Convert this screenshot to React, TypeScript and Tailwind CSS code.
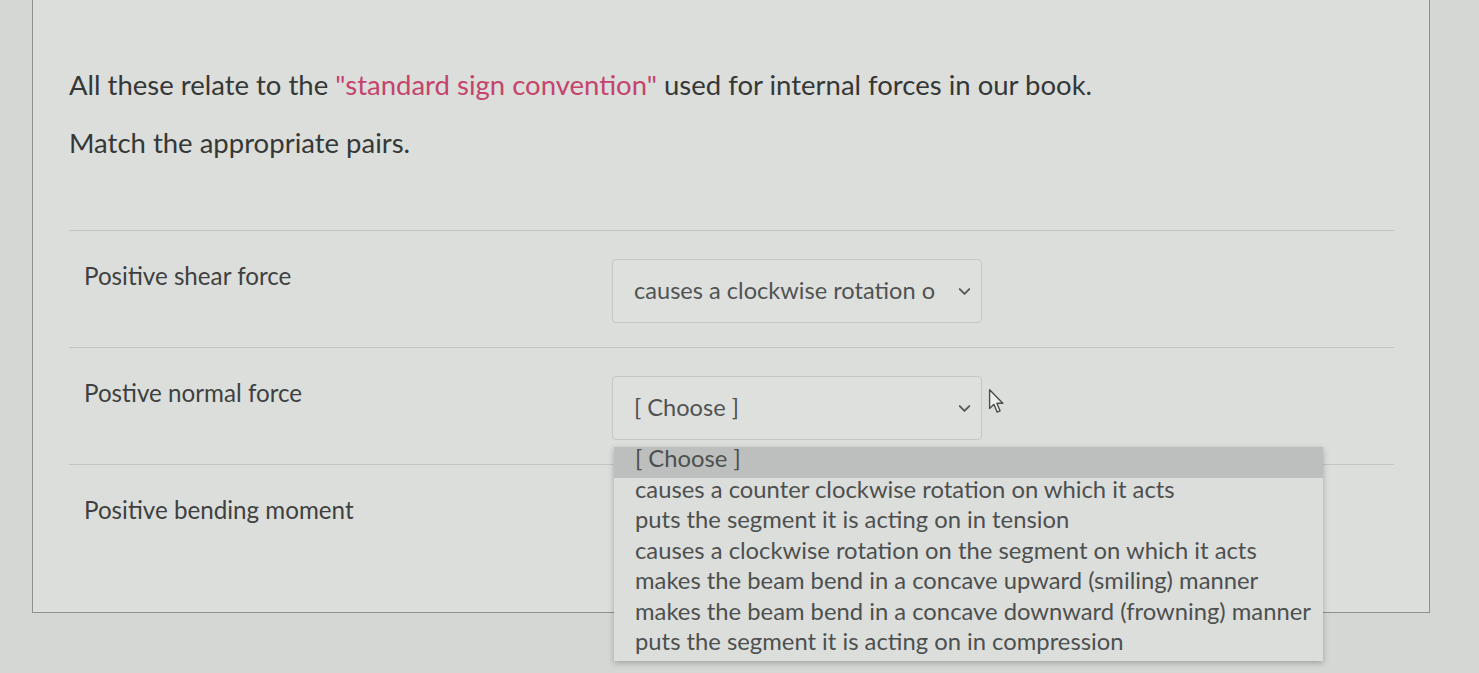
import { ChevronDown } from 'lucide-react'

const options = [
  '[ Choose ]',
  'causes a counter clockwise rotation on which it acts',
  'puts the segment it is acting on in tension',
  'causes a clockwise rotation on the segment on which it acts',
  'makes the beam bend in a concave upward (smiling) manner',
  'makes the beam bend in a concave downward (frowning) manner',
  'puts the segment it is acting on in compression',
]

function Cursor() {
  return (
    <svg width="18" height="27" viewBox="0 0 17 25" className="absolute left-[376px] top-[12px]">
      <path
        d="M1.5 1.5 L1.5 19 L5.6 15.2 L8.6 22.5 L11.4 21.3 L8.4 14.2 L14 14.2 Z"
        fill="#eceeec"
        stroke="#4a4d4b"
        strokeWidth="1.3"
        strokeLinejoin="round"
      />
    </svg>
  )
}

function Select({ value, open }: { value: string; open?: boolean }) {
  return (
    <div className="relative w-[370px]">
      <div className="h-[64px] flex items-center justify-between pl-[21px] pr-[7px] border border-[#c4c7c5] rounded-[4px] bg-[#dee0de]">
        <span className="text-[23.6px] text-[#505352] truncate">{value}</span>
        <ChevronDown size={19} strokeWidth={2.4} className="text-[#555857] shrink-0" />
      </div>
      {open && (
        <>
          <Cursor />
          <ul className="absolute z-10 left-[2px] top-[71px] w-[709px] bg-[#dcdedc] shadow-[0_2px_6px_rgba(0,0,0,0.25)]">
            {options.map((o, i) => (
              <li
                key={o}
                className={
                  'h-[30.5px] pl-[21px] text-[23.8px] leading-[23px] text-[#4d504f] whitespace-nowrap ' +
                  (i === 0 ? 'bg-[#bcbfbd]' : '')
                }
              >
                {o}
              </li>
            ))}
          </ul>
        </>
      )}
    </div>
  )
}

function Row({ label, value, open, last }: { label: string; value?: string; open?: boolean; last?: boolean }) {
  return (
    <div className={'flex border-t border-[#c3c6c4] ' + (last ? 'h-[146px]' : 'h-[117px]')}>
      <div className="w-[543px] pl-[15px] pt-[31px] text-[24.2px] leading-[28px] text-[#3e4140]">{label}</div>
      {value && (
        <div className="pt-[28px]">
          <Select value={value} open={open} />
        </div>
      )}
    </div>
  )
}

export default function App() {
  return (
    <div
      className="w-full h-[673px] overflow-hidden bg-[#d4d7d4]"
      style={{ fontFamily: 'Lato, "Open Sans", sans-serif' }}
    >
      <div className="ml-[32px] w-[1398px] h-[613px] border-x border-b border-[#8d908e] bg-[#dcdedc] pl-[36px] pr-[35px] pt-[70px]">
        <p className="text-[27.5px] leading-[30px] text-[#353837]">
          All these relate to the <span className="text-[#c4446c]">"standard sign convention"</span> used for internal
          forces in our book.
        </p>
        <p className="mt-[28px] text-[27.5px] leading-[30px] text-[#353837]">Match the appropriate pairs.</p>
        <div className="mt-[72px]">
          <Row label="Positive shear force" value="causes a clockwise rotation o" />
          <Row label="Postive normal force" value="[ Choose ]" open />
          <Row label="Positive bending moment" last />
        </div>
      </div>
    </div>
  )
}
